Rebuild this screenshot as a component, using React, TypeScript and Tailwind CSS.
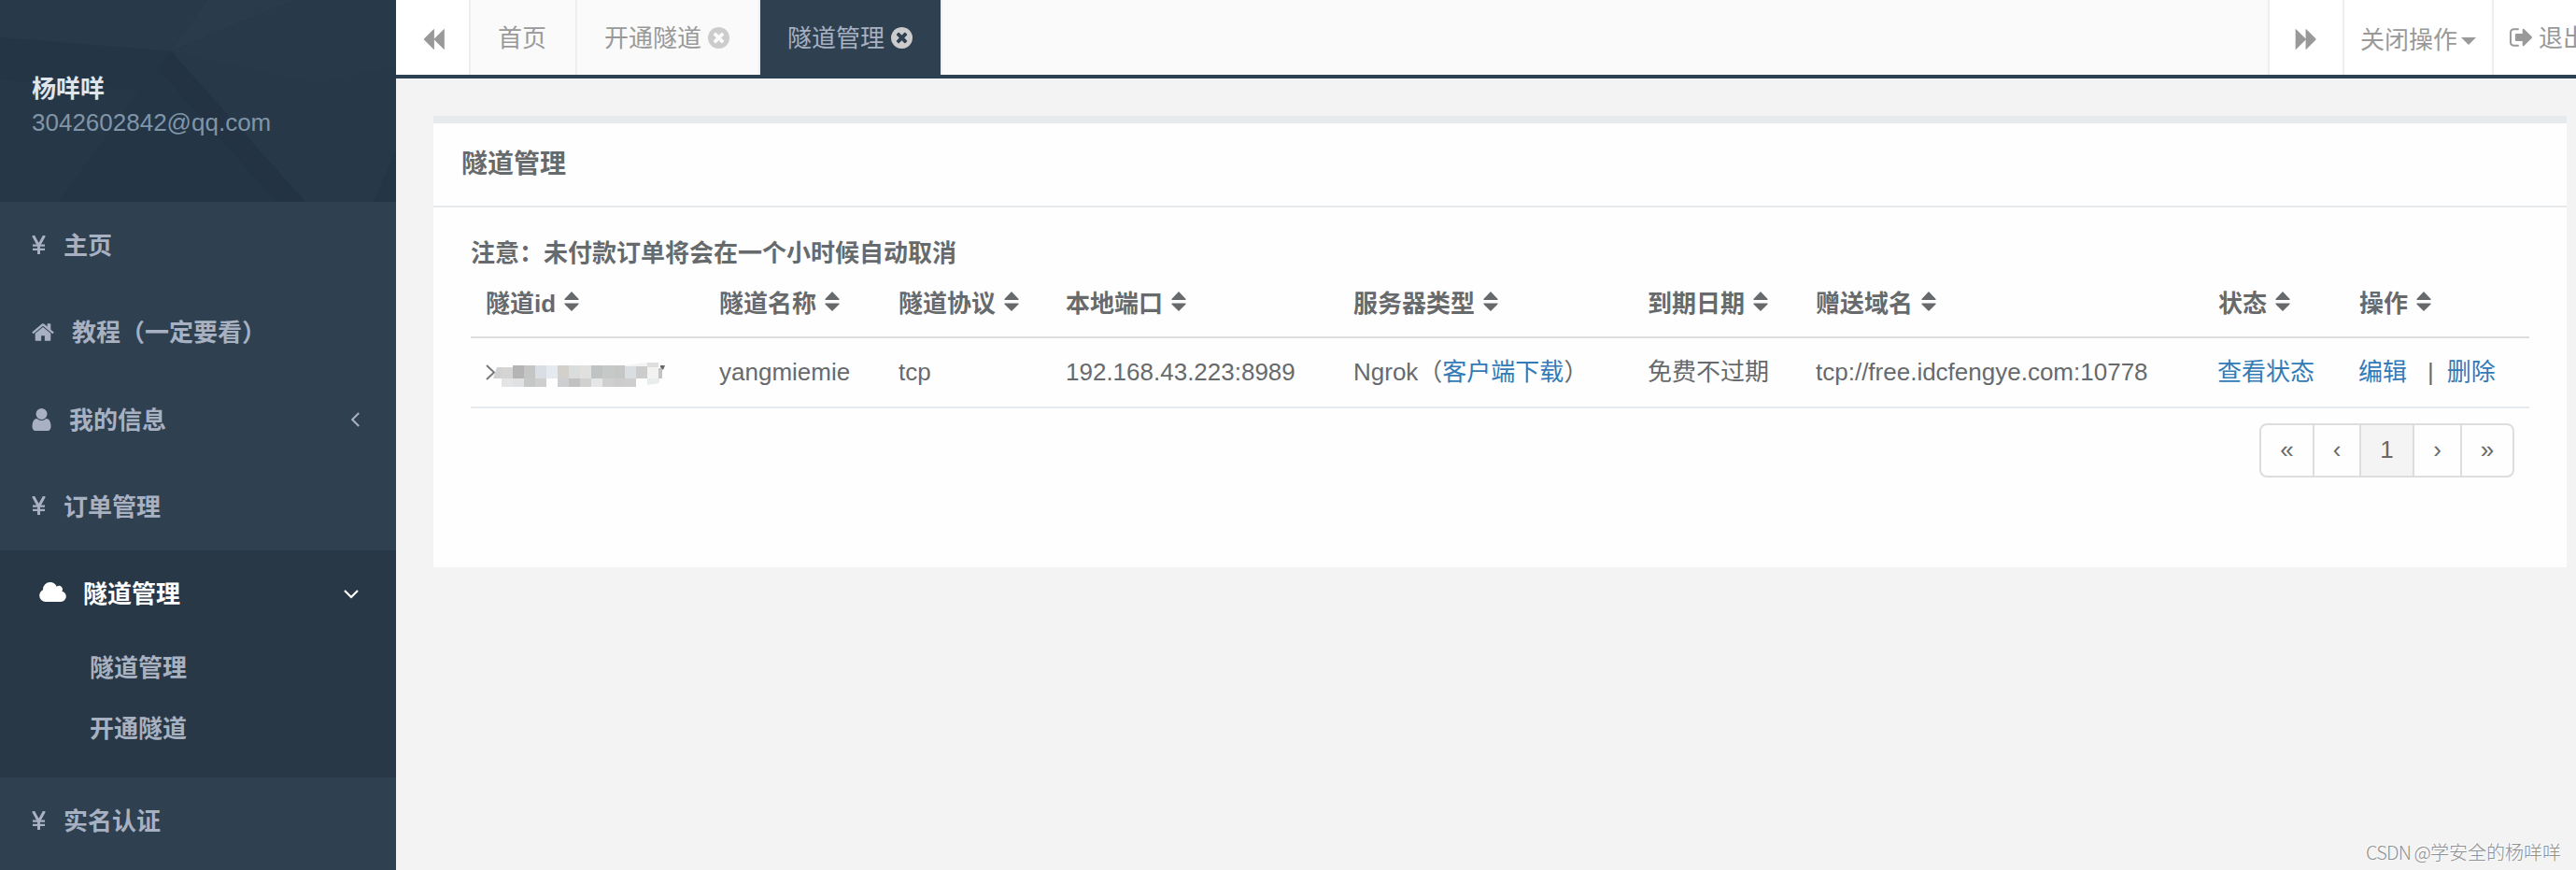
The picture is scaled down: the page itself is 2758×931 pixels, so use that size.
import { ReactNode } from "react";
import clsx from "clsx";

const icons = {
    backward: "M1683 141q19-19 32-13t13 32v1472q0 26-13 32t-32-13l-710-710q-9-9-13-19v710q0 26-13 32t-32-13l-710-710q-19-19-19-45t19-45l710-710q19-19 32-13t13 32v710q4-10 13-19z",
    forward: "M109 1651q-19 19-32 13t-13-32V160q0-26 13-32t32 13l710 710q8 8 13 19V160q0-26 13-32t32 13l710 710q19 19 19 45t-19 45l-710 710q-19 19-32 13t-13-32V922q-5 11-13 19z",
    home: "M1472 992v480q0 26-19 45t-45 19h-384v-384h-256v384h-384q-26 0-45-19t-19-45v-480q0-1 .5-3t.5-3l575-474 575 474q1 2 1 6zm223-69l-62 74q-8 9-21 11h-3q-13 0-21-7l-692-577-692 577q-12 8-24 7-13-2-21-11l-62-74q-8-10-7-23.5t11-21.5l719-599q32-26 76-26t76 26l244 204v-195q0-14 9-23t23-9h192q14 0 23 9t9 23v408l219 182q10 8 11 21.5t-7 23.5z",
    user: "M1536 1399q0 109-62.5 187t-150.5 78h-854q-88 0-150.5-78t-62.5-187q0-85 8.5-160.5t31.5-152 58.5-131 94-89 134.5-34.5q131 128 313 128t313-128q76 0 134.5 34.5t94 89 58.5 131 31.5 152 8.5 160.5zm-256-887q0 159-112.5 271.5t-271.5 112.5-271.5-112.5-112.5-271.5 112.5-271.5 271.5-112.5 271.5 112.5 112.5 271.5z",
    cloud: "M1984 1152q0 159-112.5 271.5t-271.5 112.5h-1088q-185 0-316.5-131.5t-131.5-316.5q0-132 71-241.5t187-163.5q-2-28-2-43 0-212 150-362t362-150q158 0 286.5 88t187.5 230q70-62 166-62 106 0 181 75t75 181q0 75-41 138 129 30 213 134.5t84 239.5z",
    timesCircle: "M1277 1122q0-26-19-45l-181-181 181-181q19-19 19-45 0-27-19-46l-90-90q-19-19-46-19-26 0-45 19l-181 181-181-181q-19-19-45-19-27 0-46 19l-90 90q-19 19-19 46 0 26 19 45l181 181-181 181q-19 19-19 45 0 27 19 46l90 90q19 19 46 19 26 0 45-19l181-181 181 181q19 19 45 19 27 0 46-19l90-90q19-19 19-46zm387-226q0 209-103 385.5t-279.5 279.5-385.5 103-385.5-103-279.5-279.5-103-385.5 103-385.5 279.5-279.5 385.5-103 385.5 103 279.5 279.5 103 385.5z",
    signOut: "M704 1440q0 4 1 20t.5 26.5-3 23.5-10 19.5-20.5 6.5h-320q-119 0-203.5-84.5t-84.5-203.5v-704q0-119 84.5-203.5t203.5-84.5h320q13 0 22.5 9.5t9.5 22.5q0 4 1 20t.5 26.5-3 23.5-10 19.5-20.5 6.5h-320q-66 0-113 47t-47 113v704q0 66 47 113t113 47h312l11.5 1 11.5 3 8 5.5 7 9 2 13.5zm928-544q0 26-19 45l-544 544q-19 19-45 19t-45-19-19-45v-288h-448q-26 0-45-19t-19-45v-384q0-26 19-45t45-19h448v-288q0-26 19-45t45-19 45 19l544 544q19 19 19 45z",
};

const Icon = ({ name, box, className }: { name: keyof typeof icons; box: string; className?: string }) => (
    <svg className={clsx("shrink-0", className)} viewBox={box} fill="currentColor">
        <path d={icons[name]} />
    </svg>
);

const Yen = () => (
    <svg className="w-[15px] h-5 shrink-0 -mt-0.5" viewBox="0 0 15 20" fill="none" stroke="currentColor" strokeWidth={3}>
        <path d="M1.5 0L7.5 11L13.5 0M7.5 10V20" />
        <path d="M1 10.6H14M1 14.8H14" strokeWidth={2.2} />
    </svg>
);

const columns = [
    { title: "隧道id", width: "w-[250px]" },
    { title: "隧道名称", width: "w-[192px]" },
    { title: "隧道协议", width: "w-[179px]" },
    { title: "本地端口", width: "w-[308px]" },
    { title: "服务器类型", width: "w-[315px]" },
    { title: "到期日期", width: "w-[180px]" },
    { title: "赠送域名", width: "w-[431px]" },
    { title: "状态", width: "w-[151px]" },
    { title: "操作", width: "w-[198px]" },
];

const topTiles = ["#d6d3d3", "#b5b4b4", "#c4c6c6", "#d9dde4", "#e5eaef", "#d3d0cb", "#dbdddc", "#e0e1df", "#bfc3c4", "#c7c9c8", "#c5c6c6", "#d9dee3", "#cdcccd"];
const bottomTiles = ["#e5e4e4", "#dfe1e3", "#c6c8c8", "#cfcece", "none", "#cdcecf", "#c2c1c1", "#d1d1d0", "#e5e6e8", "#cfcfcf", "#cdcccc", "#cfcece"];

// Masked tunnel id
const MaskedId = () => (
    <svg className="w-[200px] h-[30px] block" viewBox="0 0 200 30">
        <path d="M1 7L9 14.5L1 22" fill="none" stroke="#777a7c" strokeWidth={2} />
        <path d="M8 21L12 9H18V21Z" fill="#d0d2d2" />
        {topTiles.map((fill, i) => (
            <rect key={i} x={17 + i * 12} y={i === 0 ? 9 : 7} width={12} height={14} fill={fill} />
        ))}
        {bottomTiles.map((fill, i) => (
            <rect key={i} x={17 + i * 12} y={21} width={12} height={9} fill={fill} />
        ))}
        <path d="M149 7L173 4V8H149Z" fill="#f3f3f3" />
        <rect x={173} y={4} width={12} height={5} fill="#dedede" />
        <rect x={173} y={9} width={12} height={12} fill="#f2f2f0" />
        <path d="M173 21H186V26L173 28Z" fill="#e9eeed" />
        <rect x={185} y={10} width={4} height={11} fill="#c4c4c4" />
        <path d="M187 7H192L190 12L187 9Z" fill="#676a6c" />
    </svg>
);

const SortIcon = () => (
    <svg className="w-4 h-[22px] ml-[9px] mb-[5px]" viewBox="0 0 16 22" fill="currentColor">
        <path d="M8 0L15.6 8Q16 9 15 9H1Q0 9 .4 8ZM8 21L.4 13.6Q0 12.4 1 12.4H15Q16 12.4 15.6 13.6Z" />
    </svg>
);

const NavItem = ({ icon, label, arrow }: { icon: ReactNode; label: string; arrow?: boolean }) => (
    <li className="h-[93.25px] flex items-center pl-[34px] pr-[39px]">
        {icon}
        <span className="ml-[19px] pt-0.5">{label}</span>
        {arrow && (
            <svg className="w-[9px] h-4 ml-auto" viewBox="0 0 9 16" fill="none" stroke="currentColor" strokeWidth={2}>
                <path d="M8.2 1L1.2 8L8.2 15" />
            </svg>
        )}
    </li>
);

const Sidebar = () => (
    <nav className="w-[424px] shrink-0 bg-[#2f4050] text-[#a7b1c2] font-bold">
        <div className="relative h-[216px] bg-[#263747] pl-[34px] pt-[76px]">
            <svg className="absolute inset-0 w-full h-full" viewBox="0 0 424 216" preserveAspectRatio="none">
                <path d="M0 0H222L183 55L0 40Z" fill="#283a4a" />
                <path d="M183 55L222 0H315Z" fill="#2a3c4b" />
                <path d="M183 55L315 0H424V216H327Z" fill="#273949" />
                <path d="M0 40L183 55L150 97L0 85Z" fill="#243545" />
                <path d="M150 97L183 55L296 216H62Z" fill="#243646" />
                <path d="M183 55L327 216H296L170 75Z" fill="#233343" />
                <path d="M183 55L340 90L424 70V0H315Z" fill="#283a49" />
                <path d="M424 160V216H400Z" fill="#243545" />
            </svg>
            <div className="relative leading-9">
                <div className="text-[#dfe4ed] pt-px">杨咩咩</div>
                <div className="text-[#8095a8] font-normal">3042602842@qq.com</div>
            </div>
        </div>
        <ul>
            <NavItem icon={<Yen />} label="主页" />
            <NavItem icon={<Icon name="home" box="64 253 1664 1283" className="w-6 h-[19px]" />} label="教程（一定要看）" />
            <NavItem icon={<Icon name="user" box="256 128 1280 1536" className="w-[21px] h-6" />} label="我的信息" arrow />
            <NavItem icon={<Yen />} label="订单管理" />
            <li className="h-[243px] bg-[#293846]">
                <div className="h-[93px] flex items-center pl-[42px] pr-10 text-white">
                    <Icon name="cloud" box="64 128 1920 1408" className="w-[29px] h-[21px] -mt-1" />
                    <span className="ml-[18px] pt-0.5">隧道管理</span>
                    <svg className="w-4 h-[10px] ml-auto" viewBox="0 0 16 10" fill="none" stroke="currentColor" strokeWidth={2.2}>
                        <path d="M1 1L8 8L15 1" />
                    </svg>
                </div>
                <ul className="pl-24">
                    <li className="h-[65px] pt-0.5 flex items-center">隧道管理</li>
                    <li className="h-[65px] pt-0.5 flex items-center">开通隧道</li>
                </ul>
            </li>
            <NavItem icon={<Yen />} label="实名认证" />
        </ul>
    </nav>
);

const Tab = ({ label, active, closable, className }: { label: string; active?: boolean; closable?: boolean; className: string }) => (
    <div
        className={clsx(
            "h-20 flex items-center pl-[29px] border-r-2 border-[#eee]",
            active ? "bg-[#2f4050] text-[#a7b1c2]" : "text-[#999]",
            className
        )}
    >
        <span className="pt-0.5">{label}</span>
        {closable && <Icon name="timesCircle" box="128 128 1536 1536" className="w-[23px] h-[23px] ml-[7px] text-[#ccc]" />}
    </div>
);

const TopBar = () => (
    <header className="h-[84px] border-b-4 border-[#2c4152] flex bg-[#fafafa] text-[#999]">
        <div className="w-20 bg-white border-r-2 border-[#eee] flex items-center pl-[28px] pt-1">
            <Icon name="backward" box="64 122 1664 1548" className="w-6 h-[22px]" />
        </div>
        <Tab label="首页" className="w-[114px]" />
        <Tab label="开通隧道" closable className="w-[196px]" />
        <Tab label="隧道管理" active closable className="w-[195px]" />
        <div className="ml-auto flex w-[330px] bg-white whitespace-nowrap">
            <div className="w-[82px] border-x-2 border-[#eee] flex items-center pl-[27px] pt-1 shrink-0">
                <Icon name="forward" box="64 122 1664 1548" className="w-[25px] h-[22px]" />
            </div>
            <div className="w-[160px] border-r-2 border-[#eee] flex items-center pl-[17px] pt-1 shrink-0">
                <span className="pt-0.5">关闭操作</span>
                <svg className="w-4 h-2 ml-1 mt-1" viewBox="0 0 16 8" fill="currentColor">
                    <path d="M0 0H16L8 8Z" />
                </svg>
            </div>
            <div className="w-[88px] overflow-hidden flex items-center pl-[17px]">
                <Icon name="signOut" box="64 256 1568 1280" className="w-6 h-[20px]" />
                <span className="ml-[7px] pt-0.5">退出</span>
            </div>
        </div>
    </header>
);

const pages = [
    { label: "«", width: "w-[59px] rounded-l-lg" },
    { label: "‹", width: "w-[52px] -ml-0.5" },
    { label: "1", width: "w-[59px] -ml-0.5 bg-[#f4f4f4]" },
    { label: "›", width: "w-[53px] -ml-0.5" },
    { label: "»", width: "w-[58px] -ml-0.5 rounded-r-lg" },
];

export default function App() {
    return (
        <div className="relative flex h-[931px] overflow-hidden bg-[#f3f3f3] text-[26px] leading-[37px] text-[#676a6c] font-['Liberation_Sans','Noto_Sans_CJK_SC',sans-serif]">
            <Sidebar />
            <div className="flex-1 min-w-0">
                <TopBar />
                <main className="mt-10 ml-10 mr-2.5 h-[483px] bg-[#fefefe] border-t-8 border-[#e7eaec]">
                    <h5 className="h-[90px] border-b-2 border-[#e7eaec] pl-[30px] pt-[25px] text-[28px] font-bold">隧道管理</h5>
                    <div className="px-10 pt-[31px]">
                        <p className="font-bold">注意：未付款订单将会在一个小时候自动取消</p>
                        <table className="table-fixed w-[2204px] text-left whitespace-nowrap">
                            <thead>
                                <tr className="border-b-2 border-[#ddd]">
                                    {columns.map((col) => (
                                        <th key={col.title} className={clsx("h-[71px] px-4 pt-[17px] align-top font-bold", col.width)}>
                                            <div className="flex items-center">
                                                {col.title}
                                                <SortIcon />
                                            </div>
                                        </th>
                                    ))}
                                </tr>
                            </thead>
                            <tbody>
                                <tr className="h-[75px] border-b-2 border-[#e7eaec]">
                                    <td className="px-4"><MaskedId /></td>
                                    <td className="px-4">yangmiemie</td>
                                    <td className="px-4">tcp</td>
                                    <td className="px-4">192.168.43.223:8989</td>
                                    <td className="px-4">Ngrok（<a className="text-[#337ab7]">客户端下载</a>）</td>
                                    <td className="px-4">免费不过期</td>
                                    <td className="px-4">tcp://free.idcfengye.com:10778</td>
                                    <td className="px-[15px]"><a className="text-[#337ab7]">查看状态</a></td>
                                    <td className="px-[15px]">
                                        <a className="text-[#337ab7]">编辑</a>
                                        <span className="ml-[22px] mr-[14px]">|</span>
                                        <a className="text-[#337ab7]">删除</a>
                                    </td>
                                </tr>
                            </tbody>
                        </table>
                        <div className="flex justify-end mt-4 pr-4">
                            {pages.map((page) => (
                                <div key={page.label} className={clsx("h-[58px] pb-0.5 border-2 border-[#ddd] flex items-center justify-center", page.width)}>
                                    {page.label}
                                </div>
                            ))}
                        </div>
                    </div>
                </main>
            </div>
            <div className="absolute right-4 bottom-[3px] text-[20px] leading-8 text-[#8f8f8f] font-light font-['Noto_Sans_CJK_SC',sans-serif] [text-shadow:-1px_-1px_0_#fff]">
                <span className="tracking-[-0.8px]">CSDN @</span>学安全的杨咩咩
            </div>
        </div>
    );
}
